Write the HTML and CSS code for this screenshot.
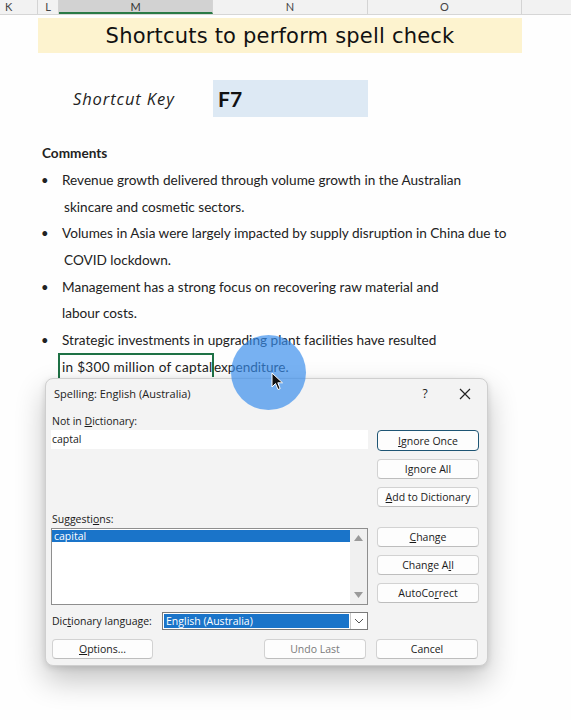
FILE: index.html
```html
<!DOCTYPE html>
<html lang="en">
<head>
<meta charset="utf-8">
<title>Shortcuts to perform spell check</title>
<link rel="stylesheet" href="styles.css">
</head>
<body>
<div class="sheet">
  <div class="colhdr">
    <div class="ch ch-k">K</div>
    <div class="ch ch-l">L</div>
    <div class="ch ch-m sel">M</div>
    <div class="ch ch-n">N</div>
    <div class="ch ch-o">O</div>
    <div class="ch ch-p"></div>
  </div>

  <div class="title-band">Shortcuts to perform spell check</div>

  <div class="key-row">
    <div class="key-label">Shortcut Key</div>
    <div class="key-box">F7</div>
  </div>

  <div class="notes">
    <div class="row heading">Comments</div>
    <div class="row bullet"><span class="dot">•</span><span>Revenue growth delivered through volume growth in the Australian</span></div>
    <div class="row cont cont-2">skincare and cosmetic sectors.</div>
    <div class="row bullet"><span class="dot">•</span><span>Volumes in Asia were largely impacted by supply disruption in China due to</span></div>
    <div class="row cont cont-2">COVID lockdown.</div>
    <div class="row bullet"><span class="dot">•</span><span>Management has a strong focus on recovering raw material and</span></div>
    <div class="row cont">labour costs.</div>
    <div class="row bullet"><span class="dot">•</span><span>Strategic investments in upgrading plant facilities have resulted</span></div>
    <div class="row cont last"><span class="active-cell">in $300 million of captal<span class="handle"></span></span><span class="after"> expenditure.</span></div>
  </div>

  <div class="dialog">
    <div class="dlg-title">
      <span class="dlg-caption">Spelling: English (Australia)</span>
      <span class="dlg-help">?</span>
      <span class="dlg-close">
        <svg width="12" height="12" viewBox="0 0 12 12"><path d="M1 1 L11 11 M11 1 L1 11" stroke="#222" stroke-width="1.2" fill="none"/></svg>
      </span>
    </div>
    <div class="dlg-body">
      <div class="dlg-left">
        <div class="lbl lbl-first">Not in <u>D</u>ictionary:</div>
        <div class="word-box">captal</div>
        <div class="lbl lbl-sugg">Suggesti<u>o</u>ns:</div>
        <div class="listbox">
          <div class="list-items">
            <div class="list-sel">capital</div>
          </div>
          <div class="scrollbar">
            <svg width="9" height="6" viewBox="0 0 9 6"><path d="M0 6 L4.5 0 L9 6 Z" fill="#9a9a9a"/></svg>
            <svg width="9" height="6" viewBox="0 0 9 6"><path d="M0 0 L4.5 6 L9 0 Z" fill="#9a9a9a"/></svg>
          </div>
        </div>
        <div class="lang-row">
          <span class="lbl">Dic<u>t</u>ionary language:</span>
          <div class="combo">
            <span class="combo-val">English (Australia)</span>
            <span class="combo-btn">
              <svg width="10" height="6" viewBox="0 0 10 6"><path d="M1 1 L5 5 L9 1" stroke="#555" stroke-width="1" fill="none"/></svg>
            </span>
          </div>
        </div>
      </div>
      <div class="dlg-right">
        <div class="btn btn-default btn-first"><u>I</u>gnore Once</div>
        <div class="btn">I<u>g</u>nore All</div>
        <div class="btn"><u>A</u>dd to Dictionary</div>
        <div class="btn btn-gap"><u>C</u>hange</div>
        <div class="btn">Change A<u>l</u>l</div>
        <div class="btn">AutoCo<u>r</u>rect</div>
      </div>
    </div>
    <div class="dlg-foot">
      <div class="btn btn-options"><u>O</u>ptions...</div>
      <div class="btn btn-undo disabled">Undo Last</div>
      <div class="btn btn-cancel">Cancel</div>
    </div>
  </div>

  <div class="spot"></div>
  <svg class="cursor" width="14" height="20" viewBox="0 0 14 20">
    <path d="M1 1 L1 15 L4.5 11.5 L7 17.5 L9.2 16.6 L6.8 10.8 L11.5 10.8 Z" fill="#111" stroke="#fff" stroke-width="1"/>
  </svg>
</div>
</body>
</html>
```

FILE: styles.css
```css
* { box-sizing: border-box; }
html, body { margin: 0; padding: 0; }
body {
  background: #fefefe;
  font-family: Lato, "Open Sans", sans-serif;
  color: #1e1e1e;
  width: 571px;
  height: 720px;
  overflow: hidden;
}
.sheet { position: relative; width: 571px; height: 720px; }

/* column header */
.colhdr {
  display: flex;
  height: 15px;
  background: #f2f2f2;
  border-bottom: 1px solid #d6d6d6;
  font-size: 11px;
  color: #444;
  line-height: 14px;
}
.ch { border-right: 1px solid #d4d4d4; text-align: center; }
.ch-k { width: 38px; text-align: left; padding-left: 5px; }
.ch-l { width: 21px; }
.ch-m { width: 154px; }
.ch-n { width: 155px; }
.ch-o { width: 154px; }
.ch-p { flex: 1; border-right: none; }
.ch.sel { background: #d2d2d2; border-bottom: 2px solid #2a7a46; color: #333; }

/* title */
.title-band {
  margin: 3px 0 0 38px;
  width: 484px;
  height: 35px;
  background: #fdf3cf;
  font-family: "DejaVu Sans", sans-serif;
  font-size: 21px;
  letter-spacing: 0.2px;
  color: #111;
  display: flex;
  align-items: center;
  justify-content: center;
}

/* shortcut key */
.key-row {
  display: flex;
  align-items: center;
  margin-top: 27px;
  height: 37px;
}
.key-label {
  width: 140px;
  margin-left: 73px;
  font-family: "Open Sans", sans-serif;
  font-style: italic;
  font-size: 16.5px;
  letter-spacing: 0.9px;
  color: #222;
}
.key-box {
  width: 155px;
  height: 37px;
  background: #dde9f4;
  font-weight: bold;
  font-size: 21px;
  color: #111;
  padding-left: 5px;
  display: flex;
  align-items: center;
}

/* notes */
.notes { margin-top: 23px; }
.row {
  height: 26.67px;
  display: flex;
  align-items: center;
  font-size: 13.6px;
  color: #222;
  white-space: nowrap;
}
.heading { padding-left: 42px; font-weight: bold; }
.bullet { padding-left: 41px; }
.dot { width: 21px; font-size: 13px; }
.cont { padding-left: 62px; }
.cont-2 { padding-left: 64px; }
.last { padding-left: 58px; }
.active-cell {
  position: relative;
  height: 28px;
  width: 156px;
  border: 2px solid #1e7145;
  padding-left: 2px;
  letter-spacing: 0.28px;
  display: flex;
  align-items: center;
}
.handle {
  position: absolute;
  right: -4px;
  bottom: -4px;
  width: 6px;
  height: 6px;
  background: #1e7145;
  border: 1px solid #fff;
}

/* dialog */
.dialog {
  position: absolute;
  left: 45px;
  top: 378px;
  width: 443px;
  height: 288px;
  background: #f3f3f3;
  border: 1px solid #cfcfcf;
  border-radius: 8px;
  box-shadow: 0 14px 30px rgba(0,0,0,0.24), 0 2px 6px rgba(0,0,0,0.12);
  font-family: "Open Sans", sans-serif;
  font-size: 10.5px;
  color: #1a1a1a;
}
.dlg-title {
  height: 29px;
  display: flex;
  align-items: center;
  padding-left: 8px;
}
.dlg-caption { flex: 1; font-size: 11px; color: #222; }
.dlg-help { width: 20px; text-align: center; font-size: 12px; margin-right: 20px; }
.dlg-close { width: 20px; display: flex; justify-content: center; margin-right: 12px; }

.dlg-body {
  display: grid;
  grid-template-columns: 317px 102px;
  column-gap: 9px;
  padding: 0 9px 0 5px;
}
.dlg-left { display: flex; flex-direction: column; }
.lbl { line-height: 14px; }
.lbl-first { margin-top: 6px; padding-left: 1px; }
.word-box {
  margin-top: 2px;
  height: 19px;
  background: #fff;
  padding-left: 1px;
  line-height: 18px;
}
.lbl-sugg { margin-top: 63px; padding-left: 1px; }
.listbox {
  margin-top: 2px;
  height: 77px;
  border: 1px solid #8e8e8e;
  background: #fff;
  display: flex;
}
.list-items { flex: 1; padding-top: 1px; }
.list-sel {
  height: 12px;
  background: #1a74c9;
  color: #fff;
  line-height: 12px;
  padding-left: 2px;
}
.scrollbar {
  width: 17px;
  background: #f0f0f0;
  display: flex;
  flex-direction: column;
  align-items: center;
  justify-content: space-between;
  padding: 6px 0 6px;
}
.lang-row {
  margin-top: 7px;
  display: flex;
  align-items: center;
}
.lang-row .lbl { width: 111px; padding-left: 1px; }
.combo {
  flex: 1;
  height: 18px;
  border: 1px solid #7a7a7a;
  background: #fff;
  display: flex;
}
.combo-val {
  flex: 1;
  margin: 1px;
  background: #1a74c9;
  color: #fff;
  line-height: 14px;
  padding-left: 2px;
}
.combo-btn {
  width: 17px;
  border-left: 1px solid #c8c8c8;
  display: flex;
  align-items: center;
  justify-content: center;
}

.dlg-right { display: flex; flex-direction: column; }
.btn {
  height: 20px;
  background: #fdfdfd;
  border: 1px solid #d2d2d2;
  border-bottom-color: #bdbdbd;
  border-radius: 4px;
  display: flex;
  align-items: center;
  justify-content: center;
  margin-top: 8px;
  color: #1a1a1a;
}
.btn-first { margin-top: 22px; height: 21px; }
.btn-default { border: 1px solid #1e5574; }
.btn-gap { margin-top: 20px; }

.dlg-foot {
  display: flex;
  padding: 0 9px 0 6px;
}
.dlg-foot .btn { margin-top: 9px; }
.btn-options { width: 101px; }
.btn-undo { width: 102px; margin-left: auto; }
.btn-cancel { width: 102px; margin-left: 10px; }
.disabled { color: #7a7a7a; }

/* presenter spotlight */
.spot {
  position: absolute;
  left: 231px;
  top: 335px;
  width: 75px;
  height: 75px;
  border-radius: 50%;
  background: rgba(55, 140, 236, 0.68);
}
.cursor {
  position: absolute;
  left: 271px;
  top: 372px;
}
```
